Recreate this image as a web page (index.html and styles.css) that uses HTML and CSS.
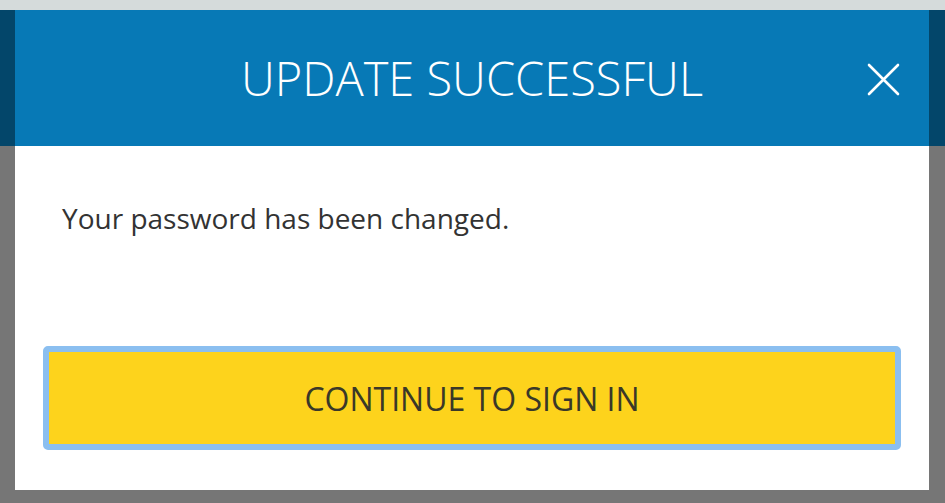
FILE: index.html
```html
<!DOCTYPE html>
<html>
<head>
<meta charset="utf-8">
<link rel="stylesheet" href="styles.css">
</head>
<body>
<div class="topstrip"></div>
<div class="stage">
  <div class="dialog">
    <div class="header">
      <h1 class="title">UPDATE SUCCESSFUL</h1>
      <button class="close" aria-label="Close">
        <svg width="33" height="33" viewBox="0 0 33 33"><path d="M2 2 L31 31 M31 2 L2 31" stroke="#fff" stroke-width="2.6" stroke-linecap="round"/></svg>
      </button>
    </div>
    <div class="body">
      <p class="msg">Your password has been changed.</p>
      <button class="continue">CONTINUE TO SIGN IN</button>
    </div>
  </div>
</div>
</body>
</html>
```
FILE: styles.css
```css
html, body {
  margin: 0;
  padding: 0;
}
body {
  width: 945px;
  height: 503px;
  overflow: hidden;
  background: #767676;
  font-family: "Open Sans", "Noto Sans", sans-serif;
}
.topstrip {
  height: 10px;
  background: #d5dbdb;
}
.stage {
  background: linear-gradient(to bottom, #03466a 0, #03466a 136px, #767676 136px);
  padding: 0 16px 13px 15px;
}
.dialog {
  background: #fff;
  height: 480px;
  display: flex;
  flex-direction: column;
}
.header {
  height: 136px;
  background: #0779b6;
  display: flex;
  align-items: center;
  justify-content: center;
  position: relative;
}
.title {
  margin: 0;
  font-weight: 300;
  font-size: 47px;
  color: #fff;
  letter-spacing: 0;
  line-height: 1;
}
.close {
  position: absolute;
  right: 29px;
  top: 53px;
  width: 33px;
  height: 33px;
  padding: 0;
  border: 0;
  background: transparent;
  display: flex;
}
.body {
  flex: 1;
  padding: 0 28px 0 28px;
  display: flex;
  flex-direction: column;
}
.msg {
  margin: 52px 0 0 19px;
  font-size: 28px;
  color: #333;
  line-height: 40px;
}
.continue {
  margin-top: 108px;
  height: 104px;
  border: 6px solid #8bbff0;
  border-radius: 5px;
  background: #fdd31c;
  font-family: "Open Sans", "Noto Sans", sans-serif;
  font-size: 32px;
  color: #3a3828;
  padding: 0;
}
```
